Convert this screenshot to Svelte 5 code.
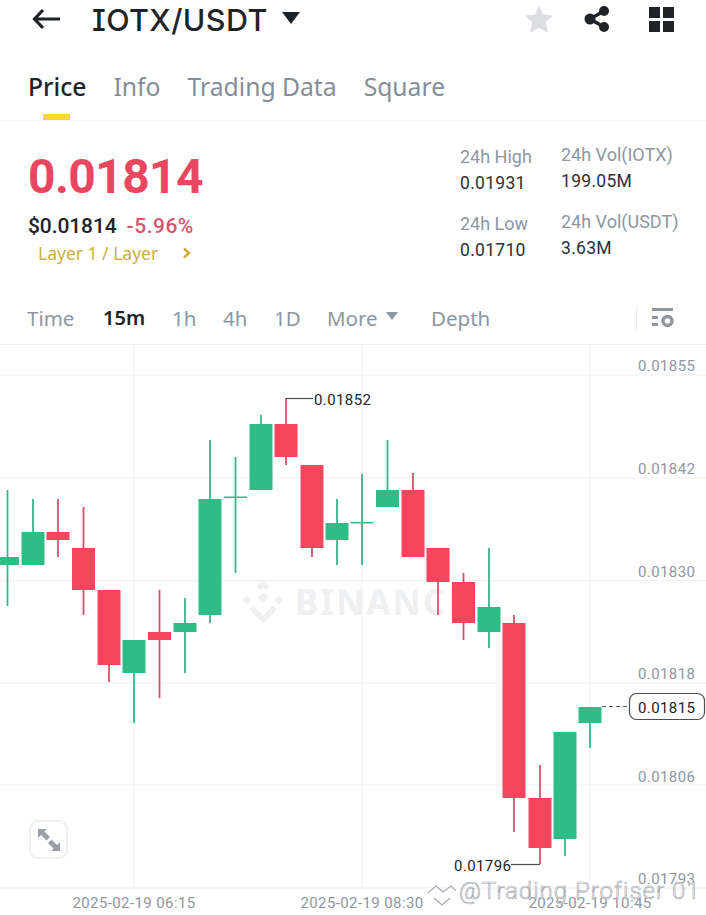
<script>
  const tabs = ['Price', 'Info', 'Trading Data', 'Square'];
  const intervals = [
    { label: 'Time', cls: 'w-time' },
    { label: '15m', cls: 'w-15m', active: true },
    { label: '1h', cls: 'w-1h' },
    { label: '4h', cls: 'w-4h' },
    { label: '1D', cls: 'w-1d' }
  ];
  const gridY = [375, 478, 580.5, 683, 785, 888];
  const gridX = [134, 362, 590];
  const priceLabels = [
    ['0.01855', 371], ['0.01842', 474], ['0.01830', 577],
    ['0.01818', 679], ['0.01806', 782], ['0.01793', 884]
  ];
  const timeLabels = [
    ['2025-02-19 06:15', 134], ['2025-02-19 08:30', 362], ['2025-02-19 10:45', 590]
  ];
  // x, wick top, body top, body bottom, wick bottom, up?
  const candles = [
    [7.5, 490, 557, 565, 606, 1],
    [33, 499, 532, 565, 565, 1],
    [58, 499, 532, 540, 557, 0],
    [83.5, 507, 548, 590, 615, 0],
    [109, 590, 590, 665, 682, 0],
    [134, 640, 640, 673, 723, 1],
    [159.5, 590, 632, 640, 698, 0],
    [185, 598, 623, 632, 673, 1],
    [210, 440, 499, 615, 623, 1],
    [235.5, 457, 496.5, 498, 573, 1],
    [261, 415, 424, 490, 490, 1],
    [286, 398, 424, 457, 465, 0],
    [312, 465, 465, 548, 557, 0],
    [337, 499, 523, 540, 565, 1],
    [362, 474, 522, 523.5, 565, 1],
    [387.5, 440, 490, 507, 507, 1],
    [413, 473, 490, 557, 557, 0],
    [438, 548, 548, 582, 615, 0],
    [463.5, 573, 582, 623, 640, 0],
    [489, 548, 607, 632, 648, 1],
    [514, 615, 623, 798, 832, 0],
    [540, 765, 798, 848, 864, 0],
    [565, 732, 732, 839, 856, 1],
    [590, 707, 707, 723, 748, 1]
  ];
</script>

<div class="page">
  <header class="topbar">
    <svg class="back" viewBox="0 0 28 22" width="28" height="22">
      <path d="M11 2 2.5 11l8.500 9M3 11h25" fill="none" stroke="#1e2329" stroke-width="3.200"/>
    </svg>
    <div class="pair">IOTX/USDT</div>
    <div class="caret"></div>
    <div class="actions">
      <svg class="star" viewBox="0 0 28 28" width="28" height="28">
        <path d="M14 1.500 17.800 10 27 11l-6.800 6.200L22.200 27 14 22.200 5.800 27l2-9.800L1 11l9.200-1z" fill="#dcdee1" stroke="#dcdee1" stroke-linejoin="round"/>
      </svg>
      <svg class="share" viewBox="0 0 28 28" width="28" height="28">
        <path d="M21 6 7 14l14 8" fill="none" stroke="#1e2329" stroke-width="3.500"/>
        <circle cx="21" cy="6" r="5" fill="#1e2329"/>
        <circle cx="7" cy="14" r="5.500" fill="#1e2329"/>
        <circle cx="21" cy="22" r="5" fill="#1e2329"/>
      </svg>
      <div class="apps"><span></span><span></span><span></span><span></span></div>
    </div>
  </header>

  <nav class="tabs">
    {#each tabs as t, i}
      <div class="tab" class:active={i === 0}>{t}</div>
    {/each}
  </nav>

  <section class="summary">
    <div class="left">
      <div class="last">0.01814</div>
      <div class="sub"><span class="usd">$0.01814</span><span class="pct">-5.96%</span></div>
      <div class="tag"><span>Layer 1 / Layer</span>
        <svg viewBox="0 0 10 12" width="10" height="12"><path d="M2 1.500 7 6l-5 4.500" fill="none" stroke="#d4ab2f" stroke-width="2.400"/></svg>
      </div>
    </div>
    <div class="stats">
      <div class="stat s1"><div class="k">24h High</div><div class="v">0.01931</div></div>
      <div class="stat s2"><div class="k">24h Vol(IOTX)</div><div class="v">199.05M</div></div>
      <div class="stat s1"><div class="k">24h Low</div><div class="v">0.01710</div></div>
      <div class="stat s2"><div class="k">24h Vol(USDT)</div><div class="v">3.63M</div></div>
    </div>
  </section>

  <div class="intervals">
    {#each intervals as it}
      <div class="iv {it.cls}" class:on={it.active}>{it.label}</div>
    {/each}
    <div class="iv w-more">More<i class="mini"></i></div>
    <div class="iv">Depth</div>
    <div class="tools">
      <svg viewBox="0 0 22 22" width="22" height="22">
        <rect x="0" y="1" width="21" height="3" fill="#8f96a1"/>
        <rect x="0" y="9" width="6" height="3" fill="#8f96a1"/>
        <rect x="0" y="16" width="6" height="3" fill="#8f96a1"/>
        <circle cx="15.500" cy="14" r="4.500" fill="none" stroke="#8f96a1" stroke-width="3.400"/>
      </svg>
    </div>
  </div>

  <div class="chart">
    <svg viewBox="0 345 706 570" width="706" height="570">
      {#each gridY as y}
        <line x1="0" x2="706" y1={y} y2={y} stroke="#f0f1f3" />
      {/each}
      {#each gridX as x}
        <line x1={x} x2={x} y1="345" y2="888" stroke="#f0f1f3" />
      {/each}

      <g fill="#eff0f1">
        <path d="M263 580l6.500 6.500-4 4L263 588l-2.500 2.500-4-4zM263 624l-14-14 4-4 10 10 10-10 4 4zM263 593l5.500 5.500-5.500 5.500-5.500-5.500zM247 596l4.500 4.500-4.500 4.500-4.500-4.500zM279 596l4.500 4.500-4.500 4.500-4.500-4.500z" transform="translate(0 -0.500)"/>
        <text x="295" y="615" class="wm">BINANCE</text>
      </g>

      {#each candles as [x, wt, bt, bb, wb, up]}
        <line x1={x} x2={x} y1={wt} y2={wb} stroke={up ? '#3bb58a' : '#d9506a'} stroke-width="1.800" />
        <rect x={x - 11.500} y={bt} width="23" height={bb - bt} fill={up ? '#2ebd85' : '#f6465d'} />
      {/each}

      <path d="M286 398.500h27" fill="none" stroke="#4a4f57" stroke-width="1.200"/>
      <text x="314" y="405" class="mark">0.01852</text>
      <path d="M511 864.500h29" fill="none" stroke="#4a4f57" stroke-width="1.200"/>
      <text x="454" y="871" class="mark">0.01796</text>

      <line x1="602" x2="629" y1="706.500" y2="706.500" stroke="#555b63" stroke-dasharray="4 3"/>

      {#each priceLabels as [t, y]}
        <text x="638" y={y} class="axis">{t}</text>
      {/each}
      {#each timeLabels as [t, x]}
        <text x={x} y="908" class="axis mid">{t}</text>
      {/each}

      <rect x="629.500" y="693.500" width="75" height="26" rx="7" fill="#fff" stroke="#4a4f57" stroke-width="1.200"/>
      <text x="638" y="713" class="mark">0.01815</text>

      <g class="credit">
        <path d="M428 893l8-7 7 6 8-6 5 5M434 898l8 7 8-7" fill="none" stroke="#a9adb3" stroke-width="1.300"/>
        <text x="459" y="899">@Trading Profiser 01</text>
      </g>
    </svg>
    <button class="expand" aria-label="Expand">
      <svg viewBox="0 0 24 24" width="24" height="24">
        <path d="M1 1h9L7.500 3.500 13 9l-3.500 3.500L4 7 1 10zM23 23h-9l2.500-2.500L11 15l3.500-3.500L20 17l3-3z" fill="#9aa0a8"/>
      </svg>
    </button>
  </div>
</div>

<style>
  :global(body) { margin: 0; background: #fff; }
  .page { width: 706px; height: 915px; overflow: hidden; font-family: "Noto Sans", "Liberation Sans", sans-serif; color: #1e2329; }

  .topbar { height: 38px; display: flex; align-items: center; padding-left: 32px; }
  .back { flex: none; }
  .pair { margin-left: 32px; font-family: Inter, sans-serif; font-feature-settings: "ss02", "cv08"; font-size: 30.500px; font-weight: 500; letter-spacing: 0.400px; }
  .caret { margin-left: 14px; margin-top: -3px; width: 0; height: 0; border-left: 9px solid transparent; border-right: 9px solid transparent; border-top: 12px solid #1e2329; }
  .actions { margin-left: auto; display: flex; align-items: center; gap: 30px; padding-right: 32px; }
  .share { margin-right: 8px; }
  .apps { display: grid; grid-template-columns: 11px 11px; gap: 3px; }
  .apps span { height: 11px; background: #1e2329; }

  .tabs { height: 83px; display: flex; gap: 27px; padding-left: 28px; box-sizing: border-box; border-bottom: 1px solid #f3f4f5; align-items: flex-start; padding-top: 31px; }
  .tab { position: relative; font-size: 24.700px; line-height: 36px; color: #858d99; }
  .tab.active { color: #1e2329; font-weight: 500; }
  .tab.active::after { content: ""; position: absolute; left: 15px; width: 27px; height: 6px; top: 45px; background: #fcd535; }

  .summary { height: 174px; display: flex; box-sizing: border-box; padding: 30px 0 0 28px; }
  .left { width: 432px; }
  .last { font-family: Roboto, sans-serif; font-size: 48px; line-height: 50px; padding-top: 1px; font-weight: 700; color: #e8475f; letter-spacing: -0.600px; }
  .sub { margin-top: 11px; display: flex; gap: 10px; font-family: Roboto, sans-serif; font-size: 21px; line-height: 26px; }
  .usd { font-weight: 500; letter-spacing: -0.100px; }
  .pct { color: #d9536b; font-weight: 500; letter-spacing: 0.500px; }
  .tag { margin: 1px 0 0 10px; display: flex; align-items: center; gap: 24px; font-size: 17.500px; line-height: 26px; color: #cfae42; }
  .stats { display: grid; grid-template-columns: 101px 1fr; row-gap: 21px; align-content: start; }
  .stat { font-family: Roboto, sans-serif; font-size: 18px; }
  .s1 { margin-top: -8px; }
  .s2 { margin-top: -10px; }
  .k { color: #8f96a1; line-height: 27px; }
  .v { line-height: 27px; font-size: 17.500px; letter-spacing: 0.300px; color: #2b3038; }

  .intervals { height: 50px; display: flex; align-items: center; box-sizing: border-box; padding: 0 0 4px 27px; border-bottom: 1px solid #f0f1f3; font-size: 20.500px; color: #8f96a1; }
  .iv { line-height: 46px; }
  .iv.on { color: #1e2329; font-weight: 600; font-size: 20px; }
  .w-time { width: 76px; }
  .w-15m { width: 69px; }
  .w-1h { width: 51px; }
  .w-4h { width: 51px; }
  .w-1d { width: 53px; }
  .w-more { width: 104px; display: flex; align-items: center; }
  .mini { margin: -4px 0 0 8px; width: 0; height: 0; border-left: 6px solid transparent; border-right: 6px solid transparent; border-top: 8px solid #8f96a1; }
  .tools { margin-left: auto; margin-right: 32px; height: 24px; padding-left: 15px; border-left: 1px solid #e9eaec; display: flex; align-items: center; }

  .chart { position: relative; height: 570px; }
  .chart svg { display: block; }
  .wm { font-family: "Noto Sans", sans-serif; font-size: 35px; font-weight: 700; letter-spacing: 2px; }
  .axis { font-family: Roboto, sans-serif; font-size: 15px; fill: #8f96a1; letter-spacing: 0.400px; }
  .mid { text-anchor: middle; }
  .mark { font-family: Roboto, sans-serif; font-size: 15px; fill: #1e2329; letter-spacing: 0.400px; }
  .credit text { font-family: Roboto, sans-serif; font-size: 24px; font-weight: 300; fill: #fff; stroke: #a9adb3; stroke-width: 0.700px; letter-spacing: 1px; }
  .expand { position: absolute; left: 29px; top: 475px; width: 39px; height: 39px; box-sizing: border-box; padding: 0; border: 2px solid #eff0f1; border-radius: 9px; background: #fff; display: flex; align-items: center; justify-content: center; }
</style>
